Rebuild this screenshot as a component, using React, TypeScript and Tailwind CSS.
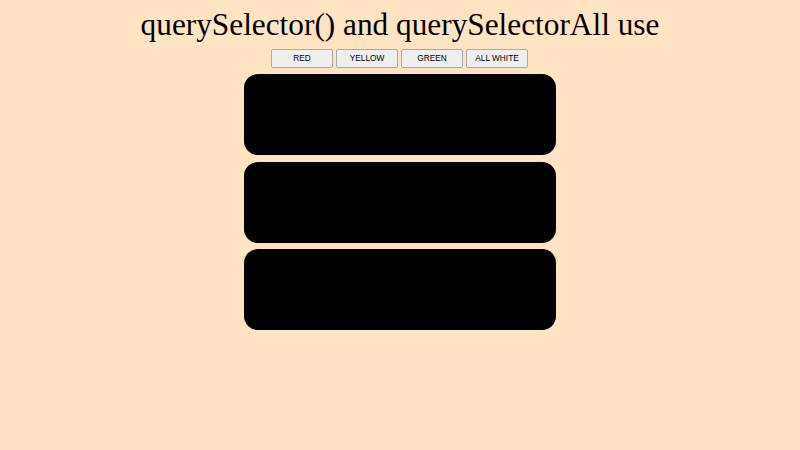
const buttons = ["RED", "YELLOW", "GREEN", "ALL WHITE"];

const App = () => {
  return (
    <div className="min-h-[450px] w-full bg-[#ffe4c4] flex flex-col items-center">
      {/* TITLE */}
      <h1 className="mt-[6px] text-[31.3px] leading-[37px] text-black font-['Liberation_Serif',serif]">
        querySelector() and querySelectorAll use
      </h1>
      {/* BUTTONS */}
      <div className="mt-[6px] -ml-[1px] flex gap-[3px]">
        {buttons.map((b) => (
          <button
            key={b}
            className="w-[62px] h-[19px] bg-[#efefef] border border-[#a9a9a9] rounded-[2px] text-[8.3px] text-black font-['Liberation_Sans',sans-serif]"
          >
            {b}
          </button>
        ))}
      </div>
      {/* BOXES */}
      <div className="mt-[6px] flex flex-col gap-[6.5px]">
        {[1, 2, 3].map((i) => (
          <div key={i} className="w-[312px] h-[81px] bg-black rounded-[14px]" />
        ))}
      </div>
    </div>
  );
};

export default App;
